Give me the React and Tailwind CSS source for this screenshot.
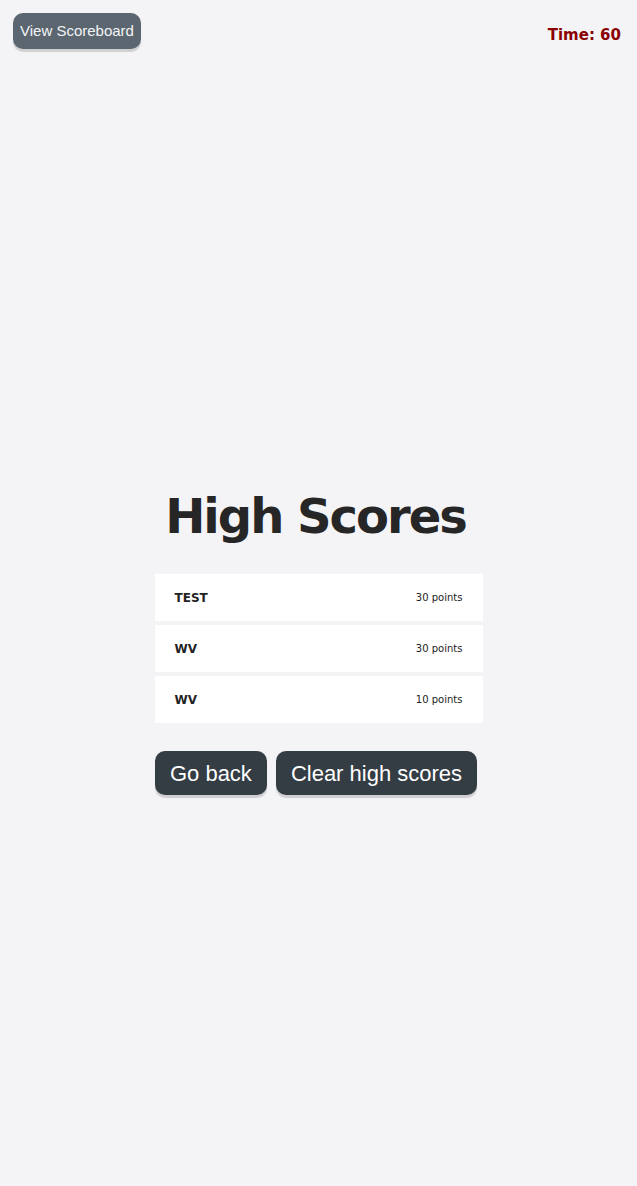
export default function App() {
  const scores = [
    { name: "TEST", points: 30 },
    { name: "WV", points: 30 },
    { name: "WV", points: 10 },
  ];
  return (
    <div className="min-h-[1186px] bg-[#f4f4f6] flex flex-col">
      <div className="flex justify-between items-start pl-[13px] pr-[16px] pt-[13px]">
        <button className="h-[36px] px-[7px] pt-[1px] rounded-[10px] bg-[#5b6670] text-[#f2f4f6] text-[15px] font-['Liberation_Sans',Arial,sans-serif] shadow-[0_3px_1px_rgba(0,0,0,0.15)]">
          View Scoreboard
        </button>
        <div className="mt-[11px] text-[15px] font-bold text-[#8b0000] font-['DejaVu_Sans',Verdana,sans-serif]">
          Time: 60
        </div>
      </div>
      <div className="flex flex-col items-center mt-[443px]">
        <h1 className="mr-[6px] text-[48px] leading-[48px] font-bold tracking-[-2px] text-[#262626] font-['DejaVu_Sans',Verdana,sans-serif]">
          High Scores
        </h1>
        <div className="mt-[34px] w-[328px] flex flex-col gap-[4px] font-['DejaVu_Sans',Verdana,sans-serif] text-[#222]">
          {scores.map((s, i) => (
            <div key={i} className="h-[47px] bg-white flex items-center justify-between px-[20px]">
              <span className="text-[12px] font-bold">{s.name}</span>
              <span className="text-[10px]">{s.points} points</span>
            </div>
          ))}
        </div>
        <div className="mt-[28px] mr-[5px] flex gap-[9px] font-['Liberation_Sans',Arial,sans-serif]">
          <button className="h-[44px] px-[15px] rounded-[10px] bg-[#343c44] text-white text-[22px] shadow-[0_3px_1px_rgba(0,0,0,0.15)]">
            Go back
          </button>
          <button className="h-[44px] px-[15px] rounded-[10px] bg-[#343c44] text-white text-[22px] shadow-[0_3px_1px_rgba(0,0,0,0.15)]">
            Clear high scores
          </button>
        </div>
      </div>
    </div>
  );
}
